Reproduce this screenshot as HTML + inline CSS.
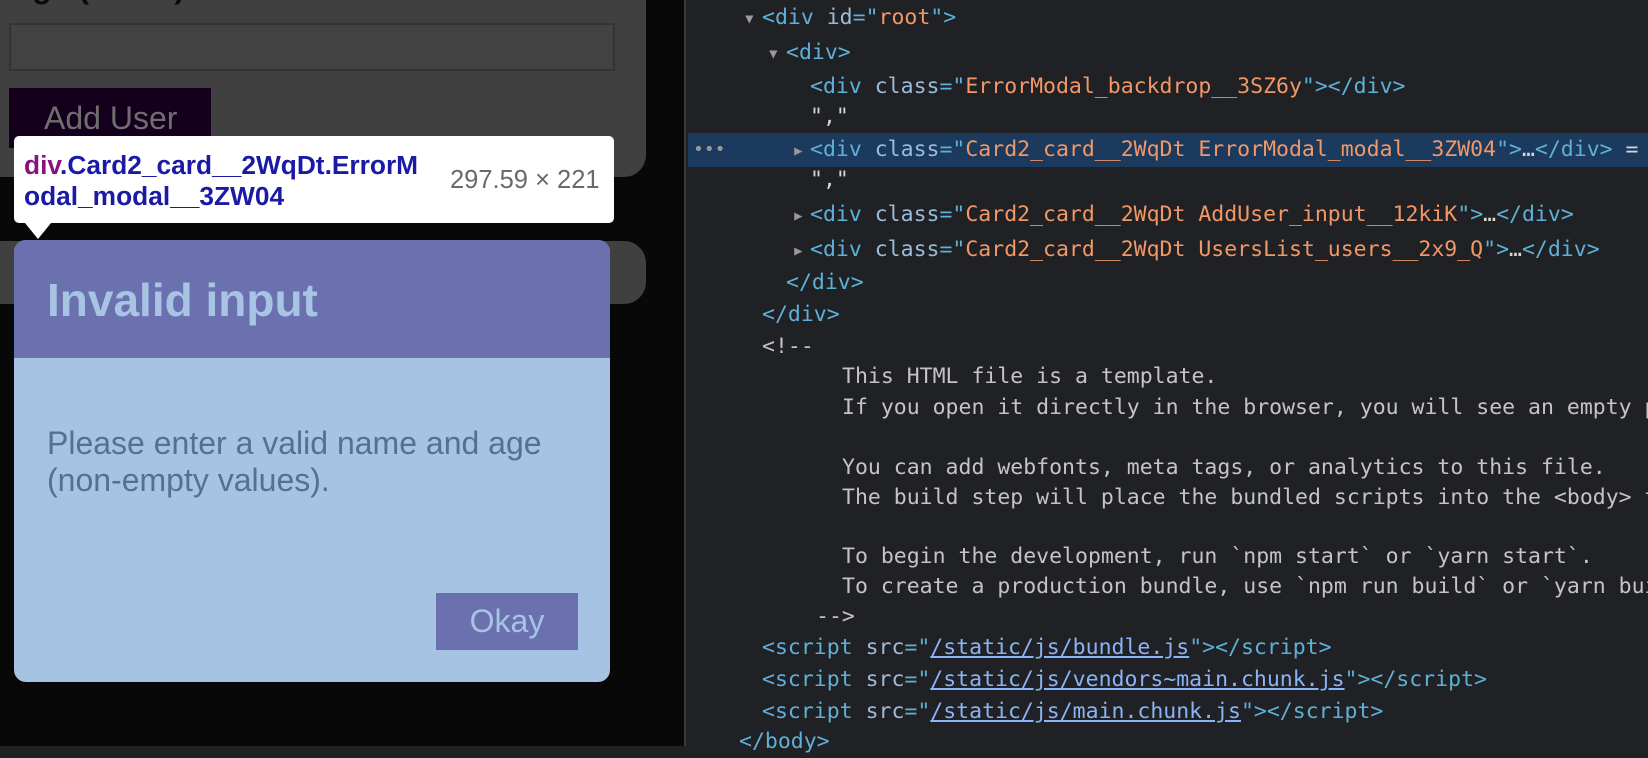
<!DOCTYPE html>
<html><head><meta charset="utf-8"><style>
*{margin:0;padding:0;box-sizing:border-box}
body{width:1648px;height:746px;overflow:hidden;background:#202124;position:relative;font-family:"Liberation Sans",Arial,sans-serif}
#left{position:absolute;left:0;top:0;width:684px;height:746px;background:#080808;overflow:hidden}
#div{position:absolute;left:684px;top:0;width:2px;height:746px;background:#3a3a3a}
.card{position:absolute;left:0;width:646px;background:#404040;border-radius:0 0 22px 0}
.ln{position:absolute;white-space:pre;font-family:"DejaVu Sans Mono","Liberation Mono",monospace;font-size:21.5px;line-height:32px;height:32px;color:#d6d6d6}
.t{color:#5db0d7}.a{color:#9bbbdc}.v{color:#f29766}.c{color:#c4c4c4}.u{color:#8ab4f8;text-decoration:underline}
.tri{color:#9a9a9a;font-size:21px}
</style></head><body>
<div id="left">
  <div class="card" style="top:0;height:177px"></div>
  <div style="position:absolute;left:9px;top:-31px;font-size:32px;font-weight:bold;color:#0a0a0a;line-height:36px">Age (Years)</div>
  <div style="position:absolute;left:9px;top:23px;width:606px;height:48px;border:2px solid #333;background:#424242"></div>
  <div style="position:absolute;left:9px;top:88px;width:202px;height:60px;background:#14001c;color:#6e6e6e;font-size:32px;line-height:46px;padding:7px 0 0 35px">Add User</div>
  <div class="card" style="top:241px;height:63px;border-radius:0 22px 22px 0"></div>
  <div style="position:absolute;left:14px;top:136px;width:600px;height:87px;background:#fff;border-radius:5px"></div>
  <div style="position:absolute;left:24px;top:150px;font-size:26.3px;font-weight:bold;line-height:31px;color:#1a1aa6;width:400px">
    <span style="color:#881280">div</span>.Card2_card__2WqDt.ErrorM<br>odal_modal__3ZW04</div>
  <div style="position:absolute;left:450px;top:165px;font-size:25.5px;color:#6a6a6a;line-height:30px">297.59 × 221</div>
  <div style="position:absolute;left:25px;top:223px;width:0;height:0;border-left:13px solid transparent;border-right:13px solid transparent;border-top:16px solid #fff"></div>
  <div style="position:absolute;left:14px;top:240px;width:596px;height:442px;border-radius:12px;overflow:hidden;background:#a7c3e4">
    <div style="height:118px;background:#6b70ae;color:#a7c4e4;font-size:46px;font-weight:bold;padding:34px 0 0 33px;line-height:52px">Invalid input</div>
    <div style="position:absolute;left:33px;top:185px;font-size:32px;line-height:37px;color:#56708f;width:540px">Please enter a valid name and age<br>(non-empty values).</div>
    <div style="position:absolute;left:422px;top:353px;width:142px;height:57px;background:#6b70ae;color:#a7c4e4;font-size:32px;line-height:57px;text-align:center">Okay</div>
  </div>
</div>
<div id="div"></div>
<div style="position:absolute;left:688px;top:133px;width:960px;height:34px;background:#1c3a5e"></div>
<div class="ln" style="left:693px;top:134px;color:#999;font-size:18px">•••</div>
<div class="ln" style="left:743px;top:2px"><span class="tri">▾</span></div>
<div class="ln" style="left:762px;top:2px"><span class="t">&lt;div</span> <span class="a">id</span><span class="t">="</span><span class="v">root</span><span class="t">"&gt;</span></div>
<div class="ln" style="left:767px;top:37px"><span class="tri">▾</span></div>
<div class="ln" style="left:786px;top:37px"><span class="t">&lt;div&gt;</span></div>
<div class="ln" style="left:810px;top:71px"><span class="t">&lt;div</span> <span class="a">class</span><span class="t">="</span><span class="v">ErrorModal_backdrop__3SZ6y</span><span class="t">"&gt;&lt;/div&gt;</span></div>
<div class="ln" style="left:810px;top:101px">","</div>
<div class="ln" style="left:792px;top:134px"><span class="tri">▸</span></div>
<div class="ln" style="left:810px;top:134px"><span class="t">&lt;div</span> <span class="a">class</span><span class="t">="</span><span class="v">Card2_card__2WqDt ErrorModal_modal__3ZW04</span><span class="t">"&gt;</span>…<span class="t">&lt;/div&gt;</span> = $0</div>
<div class="ln" style="left:810px;top:164px">","</div>
<div class="ln" style="left:792px;top:199px"><span class="tri">▸</span></div>
<div class="ln" style="left:810px;top:199px"><span class="t">&lt;div</span> <span class="a">class</span><span class="t">="</span><span class="v">Card2_card__2WqDt AddUser_input__12kiK</span><span class="t">"&gt;</span>…<span class="t">&lt;/div&gt;</span></div>
<div class="ln" style="left:792px;top:234px"><span class="tri">▸</span></div>
<div class="ln" style="left:810px;top:234px"><span class="t">&lt;div</span> <span class="a">class</span><span class="t">="</span><span class="v">Card2_card__2WqDt UsersList_users__2x9_Q</span><span class="t">"&gt;</span>…<span class="t">&lt;/div&gt;</span></div>
<div class="ln" style="left:786px;top:267px"><span class="t">&lt;/div&gt;</span></div>
<div class="ln" style="left:762px;top:299px"><span class="t">&lt;/div&gt;</span></div>
<div class="ln c" style="left:762px;top:331px">&lt;!--</div>
<div class="ln c" style="left:842px;top:361px">This HTML file is a template.</div>
<div class="ln c" style="left:842px;top:392px">If you open it directly in the browser, you will see an empty page.</div>
<div class="ln c" style="left:842px;top:452px">You can add webfonts, meta tags, or analytics to this file.</div>
<div class="ln c" style="left:842px;top:482px">The build step will place the bundled scripts into the &lt;body&gt; tag.</div>
<div class="ln c" style="left:842px;top:541px">To begin the development, run `npm start` or `yarn start`.</div>
<div class="ln c" style="left:842px;top:571px">To create a production bundle, use `npm run build` or `yarn build`.</div>
<div class="ln c" style="left:816px;top:601px">--&gt;</div>
<div class="ln" style="left:762px;top:632px"><span class="t">&lt;script</span> <span class="a">src</span><span class="t">="</span><span class="u">/static/js/bundle.js</span><span class="t">"&gt;&lt;/script&gt;</span></div>
<div class="ln" style="left:762px;top:664px"><span class="t">&lt;script</span> <span class="a">src</span><span class="t">="</span><span class="u">/static/js/vendors~main.chunk.js</span><span class="t">"&gt;&lt;/script&gt;</span></div>
<div class="ln" style="left:762px;top:696px"><span class="t">&lt;script</span> <span class="a">src</span><span class="t">="</span><span class="u">/static/js/main.chunk.js</span><span class="t">"&gt;&lt;/script&gt;</span></div>
<div class="ln" style="left:739px;top:726px"><span class="t">&lt;/body&gt;</span></div>
</body></html>
